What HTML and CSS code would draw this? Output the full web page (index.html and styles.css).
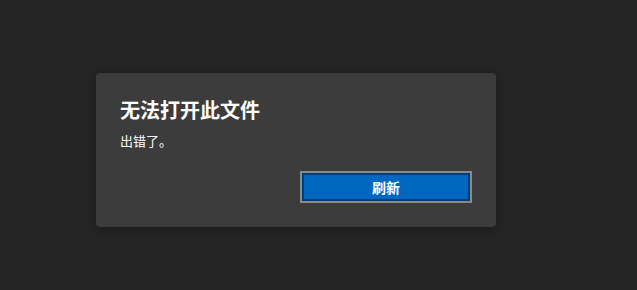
FILE: index.html
```html
<!DOCTYPE html>
<html lang="zh-CN">
<head>
<meta charset="utf-8">
<link rel="stylesheet" href="styles.css">
</head>
<body>
<div class="dialog">
  <h1 class="title">无法打开此文件</h1>
  <p class="message">出错了。</p>
  <div class="actions">
    <button class="btn">刷新</button>
  </div>
</div>
</body>
</html>
```
FILE: styles.css
```css
html, body {
  margin: 0;
  padding: 0;
  background: #252525;
  height: 100%;
}
body {
  font-family: "Noto Sans CJK SC", "Noto Sans", sans-serif;
  color: #ffffff;
  padding-top: 73px;
  padding-left: 96px;
  box-sizing: border-box;
}
.dialog {
  width: 400px;
  height: 154px;
  box-sizing: border-box;
  background: #3c3c3c;
  border-radius: 4px;
  box-shadow: 0 2px 10px rgba(0, 0, 0, 0.35);
  padding: 23px 24px 24px;
  display: flex;
  flex-direction: column;
}
.title {
  margin: 0;
  font-size: 20px;
  line-height: 28px;
  font-weight: 700;
}
.message {
  margin: 7px 0 0;
  font-size: 13px;
  line-height: 20px;
}
.actions {
  margin-top: auto;
  display: flex;
  justify-content: flex-end;
}
.btn {
  width: 172px;
  height: 32px;
  box-sizing: border-box;
  border: 2px solid #8a8a8a;
  box-shadow: inset 0 0 0 2px #00407a;
  background: #0067c0;
  color: #ffffff;
  font-family: "Noto Sans CJK SC", "Noto Sans", sans-serif;
  font-size: 14px;
  font-weight: 700;
  padding: 0;
  border-radius: 0;
}
```
